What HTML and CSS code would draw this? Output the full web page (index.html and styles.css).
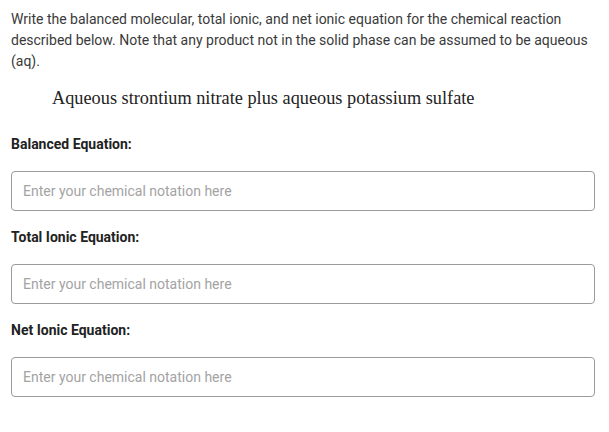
FILE: index.html
```html
<!DOCTYPE html>
<html>
<head>
<meta charset="utf-8">
<link rel="stylesheet" href="styles.css">
</head>
<body>
<div class="page">
  <p class="intro">Write the balanced molecular, total ionic, and net ionic equation for the chemical reaction described below. Note that any product not in the solid phase can be assumed to be aqueous (aq).</p>
  <p class="reaction">Aqueous strontium nitrate plus aqueous potassium sulfate</p>
  <div class="field">
    <label class="label">Balanced Equation:</label>
    <input class="box" type="text" placeholder="Enter your chemical notation here">
  </div>
  <div class="field">
    <label class="label">Total Ionic Equation:</label>
    <input class="box" type="text" placeholder="Enter your chemical notation here">
  </div>
  <div class="field">
    <label class="label">Net Ionic Equation:</label>
    <input class="box" type="text" placeholder="Enter your chemical notation here">
  </div>
</div>
</body>
</html>
```
FILE: styles.css
```css
html, body {
  margin: 0;
  padding: 0;
  background: #fff;
}
.page {
  width: 584px;
  padding: 9px 0 0 11px;
  font-family: Roboto, "Liberation Sans", sans-serif;
  font-size: 14px;
  color: #3a3a3a;
}
.intro {
  margin: 0;
  line-height: 21px;
}
.reaction {
  margin: 14px 0 0 41px;
  font-family: "Liberation Serif", serif;
  font-size: 18.3px;
  color: #222;
  line-height: 24px;
}
.field {
  display: flex;
  flex-direction: column;
}
.label {
  font-weight: 700;
  font-size: 14px;
  line-height: 20px;
  margin-top: 16px;
  color: #222;
}
.reaction + .field .label {
  margin-top: 24px;
}
.box {
  box-sizing: border-box;
  margin-top: 17px;
  height: 40px;
  width: 584px;
  border: 1px solid #9a9a9a;
  border-radius: 4px;
  padding: 0 11px;
  font-family: Roboto, "Liberation Sans", sans-serif;
  font-size: 14px;
  outline: none;
}
.box::placeholder {
  color: #a3a3a3;
}
```
